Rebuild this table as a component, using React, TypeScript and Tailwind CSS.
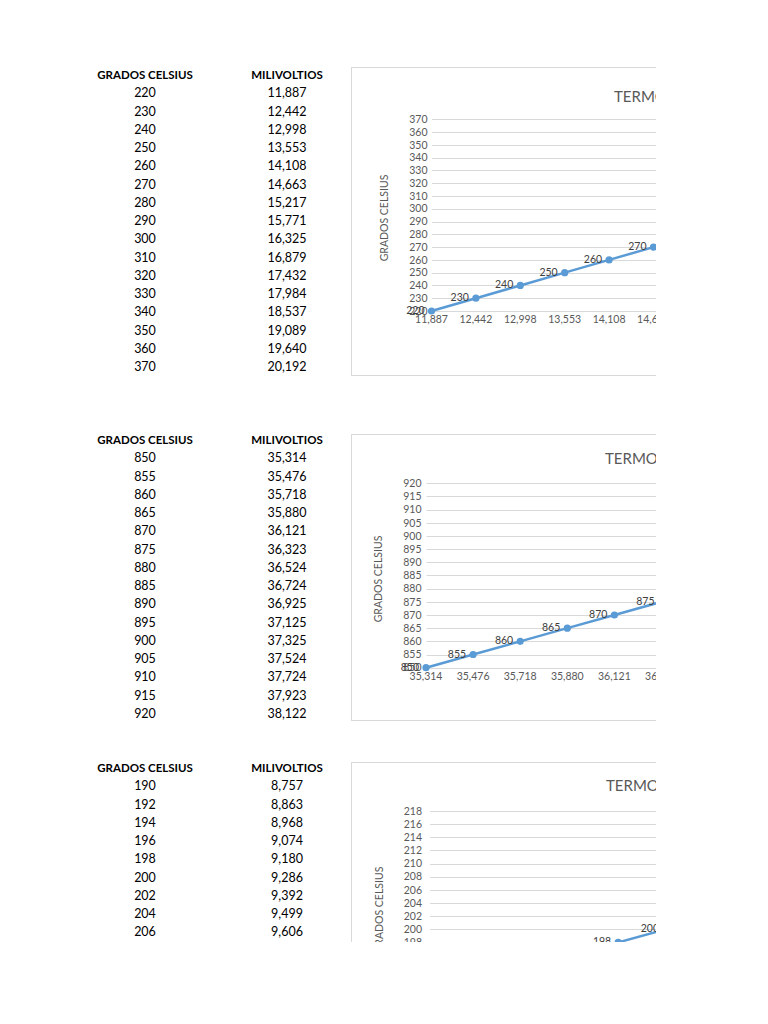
import React from 'react';

type Row = [number, string];

const tipoJ: Row[] = [
  [220, '11,887'], [230, '12,442'], [240, '12,998'], [250, '13,553'],
  [260, '14,108'], [270, '14,663'], [280, '15,217'], [290, '15,771'],
  [300, '16,325'], [310, '16,879'], [320, '17,432'], [330, '17,984'],
  [340, '18,537'], [350, '19,089'], [360, '19,640'], [370, '20,192'],
];

const tipoK: Row[] = [
  [850, '35,314'], [855, '35,476'], [860, '35,718'], [865, '35,880'],
  [870, '36,121'], [875, '36,323'], [880, '36,524'], [885, '36,724'],
  [890, '36,925'], [895, '37,125'], [900, '37,325'], [905, '37,524'],
  [910, '37,724'], [915, '37,923'], [920, '38,122'],
];

const tipoT: Row[] = [
  [190, '8,757'], [192, '8,863'], [194, '8,968'], [196, '9,074'],
  [198, '9,180'], [200, '9,286'], [202, '9,392'], [204, '9,499'],
  [206, '9,606'],
];

function DataTable({ rows }: { rows: Row[] }) {
  return (
    <div className="flex shrink-0 gap-x-[22px] text-center text-black">
      <div className="w-[120px]">
        <div className="h-[18.25px] text-[11.5px] leading-[18.25px] font-bold">GRADOS CELSIUS</div>
        {rows.map(([t]) => (
          <div key={t} className="h-[18.25px] text-[12.5px] leading-[18.25px]">{t}</div>
        ))}
      </div>
      <div className="w-[120px]">
        <div className="h-[18.25px] text-[11.5px] leading-[18.25px] font-bold">MILIVOLTIOS</div>
        {rows.map(([t, mv]) => (
          <div key={t} className="h-[18.25px] text-[12.5px] leading-[18.25px]">{mv}</div>
        ))}
      </div>
    </div>
  );
}

type ChartProps = {
  rows: Row[];
  height: number;
  title: string;
  titleX: number;
  titleY: number;
  min: number;
  max: number;
  tick: number;
  gridTop: number;
  gridStep: number;
  labelRight: number;
  plotLeft: number;
  xStart: number;
  xStep: number;
  xLabelY: number;
  yTitleX: number;
  yTitleY: number;
};

function LineChart(p: ChartProps) {
  const ticks: number[] = [];
  for (let v = p.max; v >= p.min; v -= p.tick) ticks.push(v);
  const y = (v: number) => p.gridTop + ((p.max - v) / p.tick) * p.gridStep;
  const x = (i: number) => p.xStart + i * p.xStep;
  const pts = p.rows.map(([t], i) => `${x(i)},${y(t)}`).join(' ');

  return (
    <div className="ml-[4px] w-[480px] shrink-0 border border-[#d9d9d9] bg-white" style={{ height: p.height }}>
      <svg width="478" height={p.height - 2} className="block">
        <text x={p.titleX} y={p.titleY} fontSize="15" fill="#595959">{p.title}</text>

        {ticks.map((v) => (
          <g key={v}>
            <line x1={p.plotLeft} x2={478} y1={Math.round(y(v)) + 0.5} y2={Math.round(y(v)) + 0.5} stroke="#d9d9d9" strokeWidth="1" />
            <text x={p.labelRight} y={y(v) + 3.7} textAnchor="end" fontSize="10.5" fill="#595959">{v}</text>
          </g>
        ))}

        <text
          transform={`translate(${p.yTitleX} ${p.yTitleY}) rotate(-90)`}
          y="3.7"
          textAnchor="middle"
          fontSize="10.5"
          fill="#595959"
        >
          GRADOS CELSIUS
        </text>

        {p.rows.map(([t, mv], i) => (
          <text key={t} x={x(i)} y={p.xLabelY} textAnchor="middle" fontSize="10.5" fill="#595959">{mv}</text>
        ))}

        <polyline points={pts} fill="none" stroke="#5b9bd5" strokeWidth="2.5" strokeLinejoin="round" strokeLinecap="round" />
        {p.rows.map(([t], i) => (
          <circle key={t} cx={x(i)} cy={y(t)} r="3.6" fill="#5b9bd5" />
        ))}
        {p.rows.map(([t], i) => (
          <text key={t} x={x(i) - 7} y={y(t) + 3} textAnchor="end" fontSize="10.5" fill="#404040">{t}</text>
        ))}
      </svg>
    </div>
  );
}

export default function App() {
  return (
    <div className="w-[768px] h-[1024px] bg-white font-['Lato',sans-serif]">
      <div className="w-[656px] h-[942px] overflow-hidden pt-[66px] pl-[85px]">
        {/* tipo J */}
        <div className="flex items-start">
          <DataTable rows={tipoJ} />
          <div className="mt-px">
            <LineChart
              rows={tipoJ}
              height={309}
              title="TERMOPAR TIPO J"
              titleX={262}
              titleY={34}
              min={220}
              max={370}
              tick={10}
              gridTop={51.3}
              gridStep={12.78}
              labelRight={75.5}
              plotLeft={80}
              xStart={79.5}
              xStep={44.4}
              xLabelY={255}
              yTitleX={32}
              yTitleY={150}
            />
          </div>
        </div>

        {/* tipo K */}
        <div className="mt-[54.75px] flex items-start">
          <DataTable rows={tipoK} />
          <div className="mt-[3px]">
            <LineChart
              rows={tipoK}
              height={287}
              title="TERMOPAR TIPO K"
              titleX={253}
              titleY={29}
              min={850}
              max={920}
              tick={5}
              gridTop={48.3}
              gridStep={13.17}
              labelRight={69.5}
              plotLeft={74.5}
              xStart={74}
              xStep={47.1}
              xLabelY={245}
              yTitleX={26}
              yTitleY={144}
            />
          </div>
        </div>

        {/* tipo T */}
        <div className="mt-[36px] flex items-start">
          <DataTable rows={tipoT} />
          <div className="mt-[3px]">
            <LineChart
              rows={tipoT}
              height={300}
              title="TERMOPAR TIPO T"
              titleX={254}
              titleY={28}
              min={190}
              max={218}
              tick={2}
              gridTop={48}
              gridStep={13.14}
              labelRight={70}
              plotLeft={78}
              xStart={75}
              xStep={47.8}
              xLabelY={245}
              yTitleX={27}
              yTitleY={147}
            />
          </div>
        </div>
      </div>
    </div>
  );
}
